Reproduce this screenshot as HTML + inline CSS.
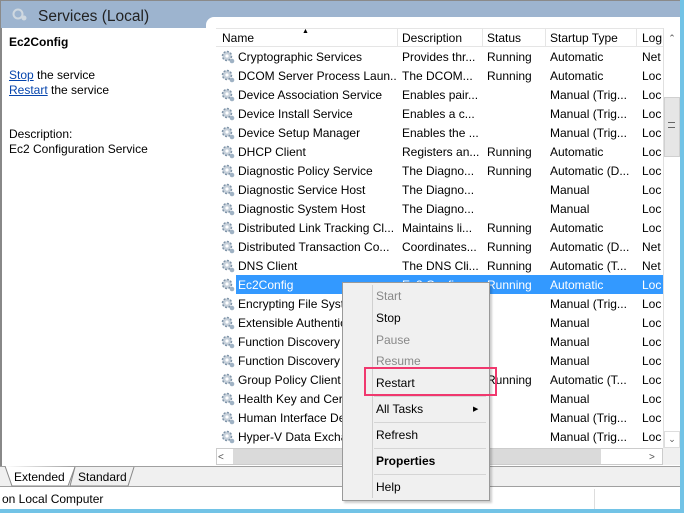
<!DOCTYPE html><html><head><style>
*{margin:0;padding:0;box-sizing:border-box}
body{width:684px;height:513px;overflow:hidden;background:#fff;font-family:"Liberation Sans",sans-serif;font-size:12px;color:#000;position:relative}
.abs{position:absolute}
.row{position:absolute;left:216px;width:447px;height:19px;white-space:nowrap}
.row span{position:absolute;top:3px;overflow:hidden}
.c0{left:22px;width:158px}.c1{left:186px;width:82px}.c2{left:271px;width:60px}.c3{left:334px;width:88px}.c4{left:426px;width:21px}
.gear{position:absolute;left:5px;top:3px;width:14px;height:14px}
.mi{position:absolute;left:376px;font-size:12px}
.sep{position:absolute;left:374px;width:112px;height:1px;background:#d5d5d5}
</style></head><body>
<div class="abs" style="left:0;top:0;width:684px;height:28px;background:#9db4cf;border:1px solid #8a8a8a;border-bottom:none"></div>
<svg class="abs" style="left:12px;top:8px" width="18" height="14"><circle cx="6" cy="6" r="4.5" fill="none" stroke="#cfd8e0" stroke-width="2"/><circle cx="12" cy="10" r="2.5" fill="#cfd8e0"/></svg>
<div class="abs" style="left:38px;top:8px;font-size:15.5px;color:#222">Services (Local)</div>
<div class="abs" style="left:206px;top:17px;width:478px;height:14px;background:#fff;border-radius:8px 0 0 0"></div>
<div class="abs" style="left:0;top:28px;width:2px;height:440px;background:#888"></div>
<div class="abs" style="left:9px;top:35px;font-weight:bold">Ec2Config</div>
<div class="abs" style="left:9px;top:68px"><u style="color:#0645ad">Stop</u> the service</div>
<div class="abs" style="left:9px;top:83px"><u style="color:#0645ad">Restart</u> the service</div>
<div class="abs" style="left:9px;top:127px">Description:</div>
<div class="abs" style="left:9px;top:142px">Ec2 Configuration Service</div>
<div class="abs" style="left:216px;top:28px;width:447px;height:19px;border-bottom:1px solid #e5e5e5;border-top:1px solid #e5e5e5;background:#fff"></div>
<div class="abs" style="left:222px;top:31px">Name</div>
<div class="abs" style="left:302px;top:28px;font-size:7px">▲</div>
<div class="abs" style="left:397px;top:29px;width:1px;height:17px;background:#e5e5e5"></div>
<div class="abs" style="left:402px;top:31px">Description</div>
<div class="abs" style="left:482px;top:29px;width:1px;height:17px;background:#e5e5e5"></div>
<div class="abs" style="left:487px;top:31px">Status</div>
<div class="abs" style="left:545px;top:29px;width:1px;height:17px;background:#e5e5e5"></div>
<div class="abs" style="left:550px;top:31px">Startup Type</div>
<div class="abs" style="left:636px;top:29px;width:1px;height:17px;background:#e5e5e5"></div>
<div class="abs" style="left:642px;top:31px">Log</div>
<div class="abs" style="left:236px;top:275px;width:427px;height:19px;background:#3399ff"></div>
<div id="rows"></div>
<script>
var d=[["Cryptographic Services","Provides thr...","Running","Automatic","Net"],["DCOM Server Process Laun...","The DCOM...","Running","Automatic","Loc"],["Device Association Service","Enables pair...","","Manual (Trig...","Loc"],["Device Install Service","Enables a c...","","Manual (Trig...","Loc"],["Device Setup Manager","Enables the ...","","Manual (Trig...","Loc"],["DHCP Client","Registers an...","Running","Automatic","Loc"],["Diagnostic Policy Service","The Diagno...","Running","Automatic (D...","Loc"],["Diagnostic Service Host","The Diagno...","","Manual","Loc"],["Diagnostic System Host","The Diagno...","","Manual","Loc"],["Distributed Link Tracking Cl...","Maintains li...","Running","Automatic","Loc"],["Distributed Transaction Co...","Coordinates...","Running","Automatic (D...","Net"],["DNS Client","The DNS Cli...","Running","Automatic (T...","Net"],["Ec2Config","Ec2 Config...","Running","Automatic","Loc"],["Encrypting File System (EFS)","","","Manual (Trig...","Loc"],["Extensible Authentication","","","Manual","Loc"],["Function Discovery Provider","","","Manual","Loc"],["Function Discovery Resource","","","Manual","Loc"],["Group Policy Client","","Running","Automatic (T...","Loc"],["Health Key and Certificate","","","Manual","Loc"],["Human Interface Device","","","Manual (Trig...","Loc"],["Hyper-V Data Exchange","","","Manual (Trig...","Loc"]];
var h="";d.forEach(function(r,i){var c=i==12?"color:#fff":"";h+='<div class="row" style="top:'+(47+19*i)+'px;'+c+'"><svg class="gear" viewBox="0 0 14 14"><circle cx="6" cy="6" r="4.5" fill="#c6d0da" stroke="#7f94a8" stroke-width="1.5" stroke-dasharray="2 1.5"/><circle cx="6" cy="6" r="1.6" fill="#fff"/><circle cx="11" cy="11" r="2.3" fill="#9fb2c4"/></svg>';for(var j=0;j<5;j++)h+='<span class="c'+j+'">'+r[j]+'</span>';h+='</div>'});document.getElementById('rows').innerHTML=h;
</script>
<div class="abs" style="left:663px;top:28px;width:17px;height:420px;background:#fff;border-left:1px solid #e0e0e0"></div>
<div class="abs" style="left:664px;top:30px;width:16px;height:16px;text-align:center;font-size:9px;color:#555;line-height:16px">⌃</div>
<div class="abs" style="left:664px;top:97px;width:16px;height:60px;background:#e6e6e6;border:1px solid #d0d0d0"></div>
<div class="abs" style="left:668px;top:122px;width:7px;height:6px;border-top:1px solid #666;border-bottom:1px solid #666"></div>
<div class="abs" style="left:664px;top:431px;width:16px;height:17px;border:1px solid #ddd;text-align:center;font-size:9px;color:#555;line-height:14px">⌄</div>
<div class="abs" style="left:216px;top:448px;width:447px;height:17px;background:#fff;border:1px solid #ccc"></div>
<div class="abs" style="left:233px;top:449px;width:368px;height:15px;background:#dadada"></div>
<div class="abs" style="left:218px;top:452px;font-size:10px;color:#555">&lt;</div>
<div class="abs" style="left:649px;top:452px;font-size:10px;color:#555">&gt;</div>
<div class="abs" style="left:663px;top:448px;width:21px;height:17px;background:#f0f0f0"></div>
<div class="abs" style="left:0;top:466px;width:684px;height:21px;background:#f0f0f0;border-top:1px solid #a0a0a0;border-bottom:1px solid #a0a0a0"></div>
<svg class="abs" style="left:0;top:466px" width="140" height="21"><path d="M5 0 L12 20 L68 20 L75 1" fill="#fff" stroke="#888"/><path d="M75 1 L70 20 L128 20 L134 1" fill="#f0f0f0" stroke="#888"/></svg>
<div class="abs" style="left:14px;top:470px">Extended</div>
<div class="abs" style="left:78px;top:470px">Standard</div>
<div class="abs" style="left:0;top:488px;width:684px;height:21px;background:#fff"></div>
<div class="abs" style="left:2px;top:492px">on Local Computer</div>
<div class="abs" style="left:594px;top:489px;width:1px;height:20px;background:#ddd"></div>
<div class="abs" style="left:0;top:509px;width:684px;height:4px;background:#72c3e6"></div>
<div class="abs" style="left:680px;top:0;width:4px;height:513px;background:#72c3e6"></div>
<div class="abs" style="left:342px;top:282px;width:148px;height:219px;background:#f0f0f0;border:1px solid #999;box-shadow:2px 2px 2px rgba(0,0,0,.2)"></div>
<div class="abs" style="left:372px;top:285px;width:1px;height:213px;background:#d0d0d0"></div>
<div class="mi" style="top:289px;color:#888">Start</div>
<div class="mi" style="top:311px">Stop</div>
<div class="mi" style="top:333px;color:#888">Pause</div>
<div class="mi" style="top:354px;color:#888">Resume</div>
<div class="mi" style="top:376px">Restart</div>
<div class="sep" style="top:396px"></div>
<div class="mi" style="top:402px">All Tasks</div>
<div class="abs" style="left:473px;top:405px;font-size:7px">▶</div>
<div class="sep" style="top:422px"></div>
<div class="mi" style="top:428px">Refresh</div>
<div class="sep" style="top:448px"></div>
<div class="mi" style="top:454px;font-weight:bold">Properties</div>
<div class="sep" style="top:474px"></div>
<div class="mi" style="top:480px">Help</div>
<div class="abs" style="left:364px;top:367px;width:133px;height:29px;border:2px solid #f0386e"></div>
</body></html>
